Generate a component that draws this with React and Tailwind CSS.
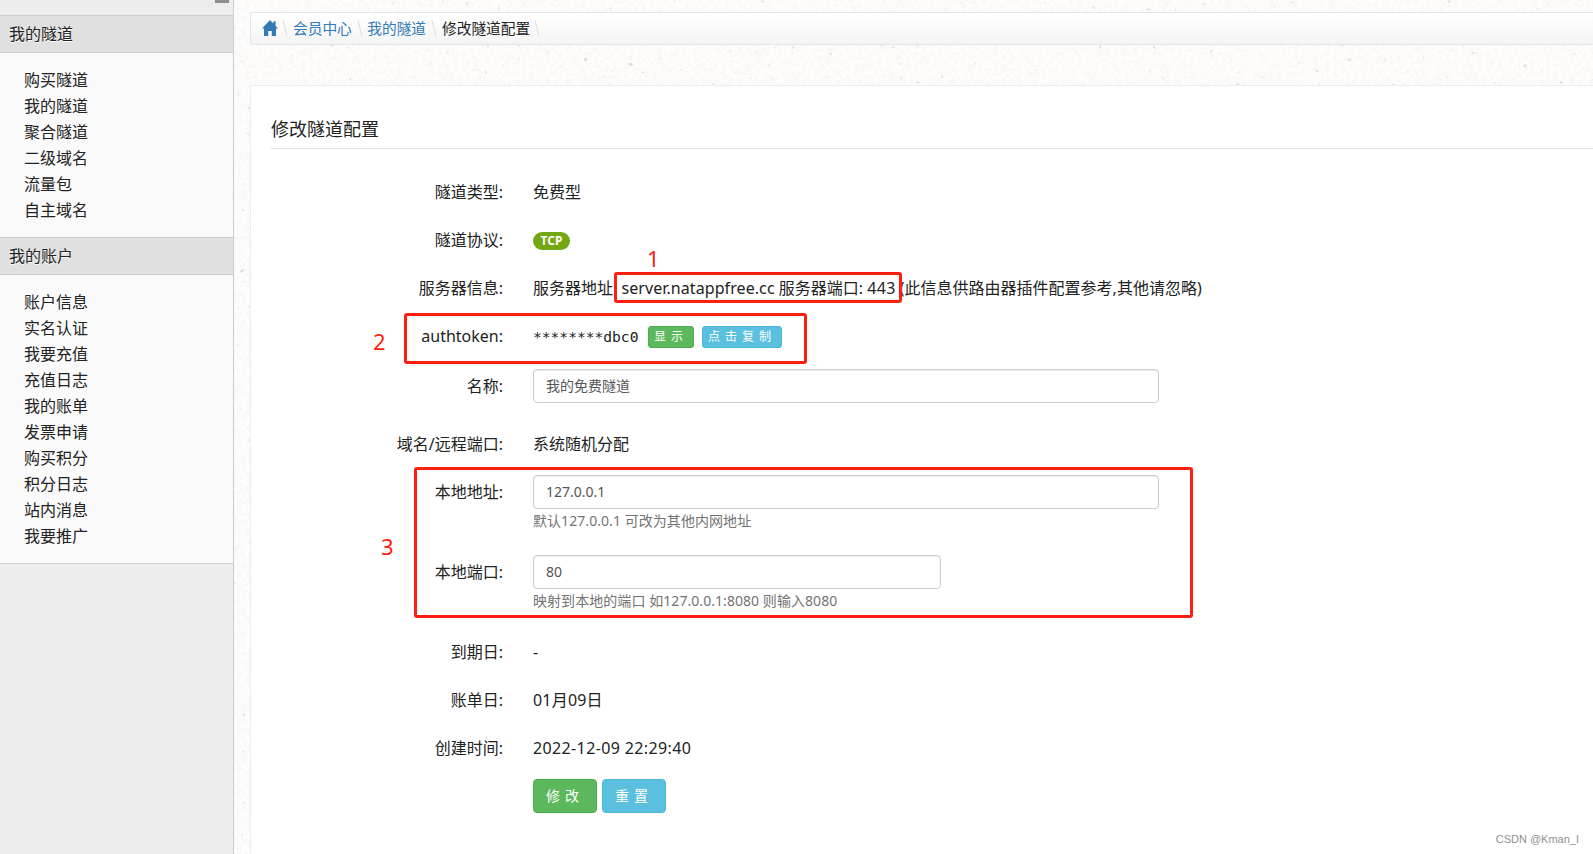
import clsx from "clsx";

const menus = [
  {
    title: "我的隧道",
    items: ["购买隧道", "我的隧道", "聚合隧道", "二级域名", "流量包", "自主域名"],
  },
  {
    title: "我的账户",
    items: [
      "账户信息",
      "实名认证",
      "我要充值",
      "充值日志",
      "我的账单",
      "发票申请",
      "购买积分",
      "积分日志",
      "站内消息",
      "我要推广",
    ],
  },
];

const Sidebar = () => (
  <aside className="w-[234px] shrink-0 border-r border-[#ccc] bg-[#ededed]">
    <div className="h-[15px] flex justify-end pr-1">
      <span className="w-[14px] h-[3px] bg-[#8e8e8e]" />
    </div>
    {menus.map((menu) => (
      <div key={menu.title}>
        <h3 className="h-[38px] border-y border-[#ccc] bg-[#e0e0e0] pl-[9px] leading-[37px] [text-shadow:0_1px_0_#fff]">
          {menu.title}
        </h3>
        <ul className="bg-[#fafafa] pt-[14px] pb-[14px] pl-6">
          {menu.items.map((item) => (
            <li key={item} className="h-[26px] leading-[26px]">
              {item}
            </li>
          ))}
        </ul>
      </div>
    ))}
    <div className="border-t border-[#ccc]" />
  </aside>
);

// paper grain behind the content column, plus a few darker flecks
const Paper = () => (
  <svg className="absolute inset-0 w-full h-full" aria-hidden="true">
    <filter id="grain" x="0" y="0" width="100%" height="100%" colorInterpolationFilters="sRGB">
      <feTurbulence type="fractalNoise" baseFrequency="0.25" numOctaves="3" seed="4" />
      <feColorMatrix values="0 0 0 0 0.55  0 0 0 0 0.52  0 0 0 0 0.48  0.12 0 0 0 -0.045" />
    </filter>
    <filter id="flecks" x="0" y="0" width="100%" height="100%" colorInterpolationFilters="sRGB">
      <feTurbulence type="fractalNoise" baseFrequency="0.16" numOctaves="2" seed="11" />
      <feColorMatrix values="0 0 0 0 0.5  0 0 0 0 0.48  0 0 0 0 0.45  1.6 0 0 0 -1.19" />
    </filter>
    <rect width="100%" height="100%" fill="#fefdfc" />
    <rect width="100%" height="100%" filter="url(#grain)" />
    <rect width="100%" height="100%" filter="url(#flecks)" />
  </svg>
);

const Separator = () => (
  <svg className="w-[6px] h-[17px] shrink-0" viewBox="0 0 6 17" fill="none">
    <path d="M1 0.5L5 16.5" stroke="#dcdcdc" />
  </svg>
);

const Breadcrumb = () => (
  <nav className="h-[33px] flex items-center rounded-l border border-r-0 border-[#e5e5e5] bg-linear-to-b from-white to-[#f4f4f4] pl-[11px] text-[14.7px] text-[#337ab7]">
    <svg className="w-4 h-4 mr-1 -mt-0.5" viewBox="0 0 16 16" fill="currentColor">
      <path d="M8 0L0 8.4H2V16H6.2V11H9.8V16H14V8.4H16L13.6 5.8V1.2H11.4V3.5Z" />
    </svg>
    <Separator />
    <a className="ml-[5px] mr-[5px]">会员中心</a>
    <Separator />
    <a className="ml-[4.5px] mr-[5px]">我的隧道</a>
    <Separator />
    <span className="ml-[5px] mr-1 text-[#222]">修改隧道配置</span>
    <Separator />
  </nav>
);

const Row = ({ label, className, children }) => (
  <div className={clsx("flex", className)}>
    <div className="w-[232px] mr-[30px] shrink-0 text-right leading-[34px]">{label}</div>
    <div className="leading-[34px] whitespace-nowrap">{children}</div>
  </div>
);

const Input = ({ value, className }) => (
  <input
    readOnly
    value={value}
    className={clsx(
      "block h-[34px] rounded border border-[#ccc] bg-white px-3 pb-0.5 text-sm text-[#555] shadow-[inset_0_1px_1px_rgba(0,0,0,0.075)]",
      className
    )}
  />
);

const Help = ({ children }) => (
  <p className="h-[26px] leading-[23px] text-sm text-[#737373] tracking-[0.06px]">{children}</p>
);

const App = () => {
  return (
    <div className="relative w-[1593px] h-[854px] overflow-hidden flex bg-white text-base text-[#222] font-['Noto_Sans','Noto_Sans_CJK_SC',sans-serif]">
      <Sidebar />

      <main className="relative flex-1 min-w-0 overflow-hidden">
        <Paper />
        <div className="relative h-full pl-4 pt-[12px] flex flex-col">
          <Breadcrumb />

          <section className="mt-10 flex-1 border-l border-t border-[#eee] bg-white pl-5">
            <h2 className="h-[63px] border-b border-[#ddd] pt-[25px] text-lg leading-9">
              修改隧道配置
            </h2>

            <form className="pt-[26px]">
              <Row label="隧道类型:" className="h-12">
                免费型
              </Row>
              <Row label="隧道协议:" className="h-12">
                <span className="mt-[9px] flex h-[18px] w-[37px] items-center justify-center rounded-full bg-[#73a814] text-xs font-bold text-white">
                  TCP
                </span>
              </Row>
              <Row label="服务器信息:" className="h-12">
                服务器地址:{" "}
                <span className="tracking-[0.08px]">server.natappfree.cc</span>{" "}
                服务器端口: <span className="tracking-[0.3px]">443</span>{" "}
                (此信息供路由器插件配置参考,其他请忽略)
              </Row>
              <Row label="authtoken:" className="h-[50px]">
                <div className="flex h-9 items-center">
                  <span className="font-['DejaVu_Sans_Mono',monospace] text-[14.6px] w-[115px]">
                    ********dbc0
                  </span>
                  <button className="h-[22px] w-[46px] rounded-[3px] border border-[#4cae4c] bg-[#5cb85c] pl-[5px] text-left text-xs leading-5 tracking-[5px] text-white">
                    显示
                  </button>
                  <button className="ml-2 h-[22px] w-[80px] rounded-[3px] border border-[#46b8da] bg-[#5bc0de] pl-[5px] text-left text-xs leading-5 tracking-[5px] text-white">
                    点击复制
                  </button>
                </div>
              </Row>
              <Row label="名称:" className="h-[58px]">
                <Input value="我的免费隧道" className="w-[626px]" />
              </Row>
              <Row label="域名/远程端口:" className="h-12">
                系统随机分配
              </Row>
              <Row label="本地地址:" className="h-20">
                <Input value="127.0.0.1" className="w-[626px]" />
                <Help>默认127.0.0.1 可改为其他内网地址</Help>
              </Row>
              <Row label="本地端口:" className="h-20">
                <Input value="80" className="w-[408px]" />
                <Help>映射到本地的端口 如127.0.0.1:8080 则输入8080</Help>
              </Row>
              <Row label="到期日:" className="h-12">
                -
              </Row>
              <Row label="账单日:" className="h-12">
                <span className="tracking-[0.2px]">01月09日</span>
              </Row>
              <Row label="创建时间:" className="h-12">
                <span className="tracking-[0.37px]">2022-12-09 22:29:40</span>
              </Row>
              <Row label="">
                <div className="flex gap-[5px]">
                  <button className="h-[34px] w-16 rounded border border-[#4cae4c] bg-[#5cb85c] pl-3 text-left text-sm leading-8 tracking-[5px] text-white">
                    修改
                  </button>
                  <button className="h-[34px] w-16 rounded border border-[#46b8da] bg-[#5bc0de] pl-3 text-left text-sm leading-8 tracking-[5px] text-white">
                    重置
                  </button>
                </div>
              </Row>
            </form>
          </section>
        </div>
      </main>

      {/* annotations */}
      <div className="absolute left-[614px] top-[272px] h-[31px] w-[288px] rounded-[3px] border-3 border-[#ff1f10]" />
      <div className="absolute left-[404px] top-[313px] h-[51px] w-[403px] rounded-[3px] border-3 border-[#ff1f10]" />
      <div className="absolute left-[414px] top-[467px] h-[151px] w-[779px] rounded-[3px] border-3 border-[#ff1f10]" />
      <span className="absolute left-[647px] top-[246px] text-[22px] leading-6 text-[#ff1f10]">1</span>
      <span className="absolute left-[373px] top-[329px] text-[22px] leading-6 text-[#ff1f10]">2</span>
      <span className="absolute left-[381px] top-[534px] text-[22px] leading-6 text-[#ff1f10]">3</span>
      <span className="absolute right-[14px] bottom-[7px] font-['Liberation_Sans',sans-serif] text-[11px] leading-4 text-[#8f8f8f]">
        CSDN @Kman_I
      </span>
    </div>
  );
};

export default App;
